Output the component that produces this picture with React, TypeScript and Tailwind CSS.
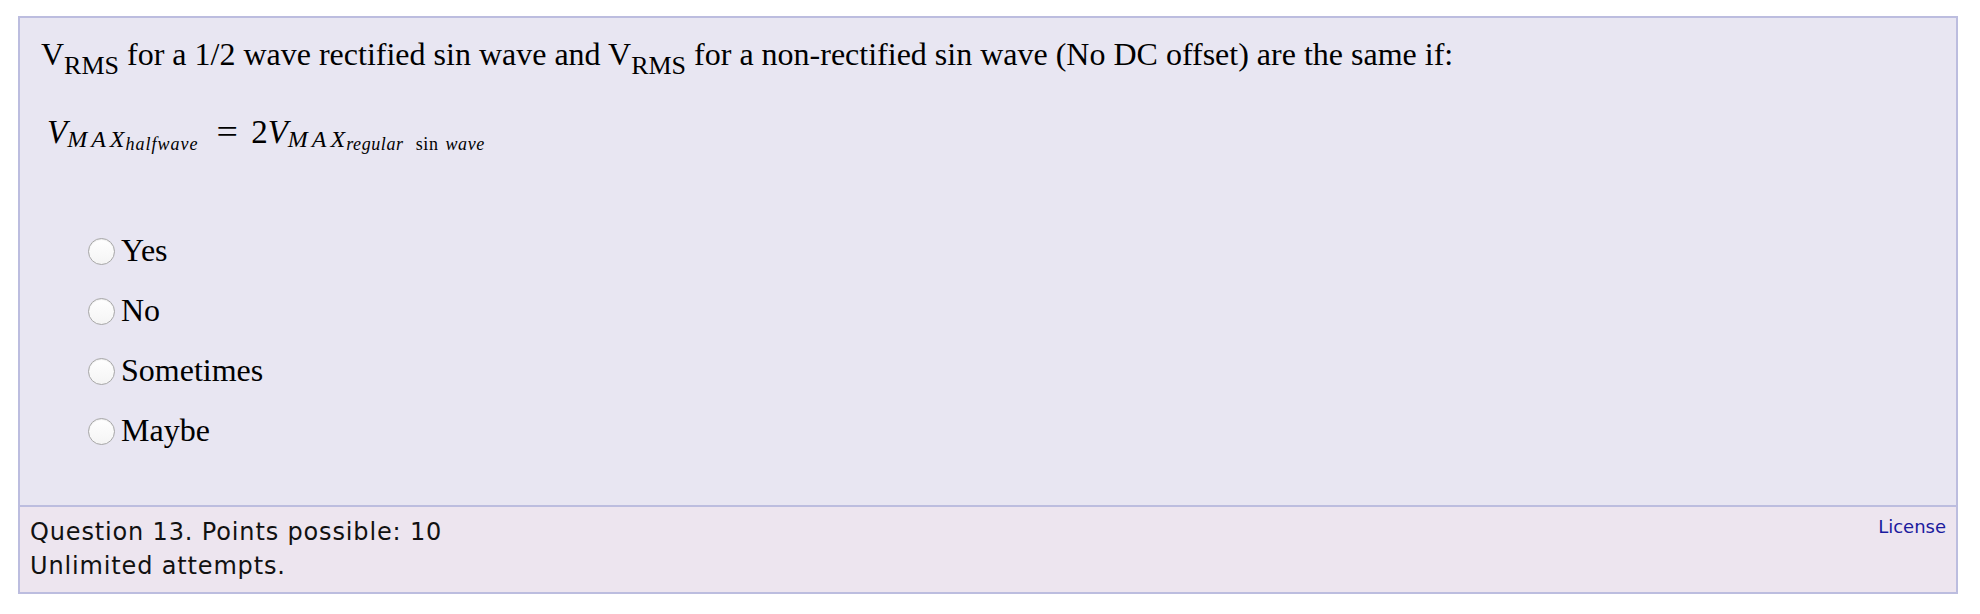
import React from 'react'

const OPTIONS = ['Yes', 'No', 'Sometimes', 'Maybe']

function Sub({ children }: { children: React.ReactNode }) {
  return <span className="relative top-[9px] text-[26px] leading-none">{children}</span>
}

function Max({ children }: { children: React.ReactNode }) {
  return (
    <span className="relative top-[4px] text-[24px] leading-none italic">
      <span className="tracking-[4px]">MA</span>X{children}
    </span>
  )
}

function MathLine() {
  return (
    <div className="mt-[40px] pl-[6px] text-[33px] leading-[40px] whitespace-nowrap">
      <span className="italic">V</span>
      <Max>
        <span className="relative top-[3px] ml-[1px] text-[18px] leading-none tracking-[1px]">halfwave</span>
      </Max>
      <span className="ml-[19px] mr-[15px] inline-block scale-x-[1.15]">=</span>
      <span>2</span>
      <span className="italic">V</span>
      <Max>
        <span className="relative top-[3px] ml-[1px] text-[18px] leading-none tracking-[0.6px]">
          regular<span className="ml-[12px] not-italic">sin</span>
          <span className="ml-[7px]">wave</span>
        </span>
      </Max>
    </div>
  )
}

export default function App() {
  return (
    <div className="min-h-[614px] bg-white pt-4 pl-[18px] font-['Liberation_Serif',serif] text-black">
      <div className="w-[1940px] border-2 border-[#bcbddf]">
        <div className="h-[487px] bg-[#e8e6f2] pt-[18px] pl-[21px]">
          <p className="text-[32px] leading-[36px] whitespace-nowrap">
            V<Sub>RMS</Sub> for a 1/2 wave rectified sin wave and V<Sub>RMS</Sub> for a non-rectified sin wave (No DC
            offset) are the same if:
          </p>
          <MathLine />
          <div className="mt-[68px] ml-[47px] flex flex-col">
            {OPTIONS.map((opt) => (
              <label key={opt} className="flex h-[60px] items-center text-[32px] leading-[60px]">
                <span className="h-[27px] w-[27px] translate-y-[1px] rounded-full border border-[#a7a7a7] bg-gradient-to-b from-white to-[#f4f4f4] shadow-[inset_0_1px_1px_rgba(0,0,0,0.08)]" />
                <span className="ml-[6px]">{opt}</span>
              </label>
            ))}
          </div>
        </div>
        <div className="flex h-[87px] justify-between border-t-2 border-[#bcbddf] bg-[#ede5ef] pt-[8px] pr-[10px] pl-[10px] font-['DejaVu_Sans',sans-serif]">
          <div className="text-[24px] leading-[34px] tracking-[0.85px] text-[#111]">
            <div>Question 13. Points possible: 10</div>
            <div>Unlimited attempts.</div>
          </div>
          <a className="mt-[2px] text-[18px] leading-[20px] text-[#1b1a9e]">License</a>
        </div>
      </div>
    </div>
  )
}
